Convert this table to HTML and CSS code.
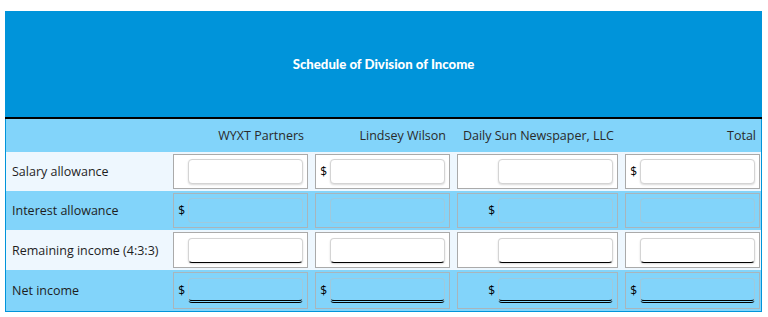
FILE: index.html
```html
<!DOCTYPE html>
<html lang="en">
<head>
    <meta charset="UTF-8">
    <meta name="viewport" content="width=device-width, initial-scale=1.0">
    <title>Schedule of Division of Income</title>
    <link rel="stylesheet" href="styles.css">
</head>
<body>
    <div class="schedule">
        <div class="schedule-title">Schedule of Division of Income</div>

        <div class="row row-head">
            <div class="label"></div>
            <div class="col-head">WYXT Partners</div>
            <div class="col-head">Lindsey Wilson</div>
            <div class="col-head">Daily Sun Newspaper, LLC</div>
            <div class="col-head">Total</div>
        </div>

        <!-- Salary allowance -->
        <div class="row row-light">
            <div class="label">Salary allowance</div>
            <div class="cell"><input class="amount" type="text"></div>
            <div class="cell"><span class="cur">$</span><input class="amount" type="text"></div>
            <div class="cell"><input class="amount" type="text"></div>
            <div class="cell"><span class="cur">$</span><input class="amount" type="text"></div>
        </div>

        <!-- Interest allowance -->
        <div class="row row-blue">
            <div class="label">Interest allowance</div>
            <div class="cell"><span class="cur">$</span><input class="amount" type="text" disabled></div>
            <div class="cell"><input class="amount" type="text" disabled></div>
            <div class="cell"><span class="cur">$</span><input class="amount" type="text" disabled></div>
            <div class="cell"><input class="amount" type="text" disabled></div>
        </div>

        <!-- Remaining income -->
        <div class="row row-light row-tall">
            <div class="label">Remaining income (4:3:3)</div>
            <div class="cell"><input class="amount single" type="text"></div>
            <div class="cell"><input class="amount single" type="text"></div>
            <div class="cell"><input class="amount single" type="text"></div>
            <div class="cell"><input class="amount single" type="text"></div>
        </div>

        <!-- Net income -->
        <div class="row row-blue row-taller">
            <div class="label">Net income</div>
            <div class="cell"><span class="cur">$</span><input class="amount double" type="text" disabled></div>
            <div class="cell"><span class="cur">$</span><input class="amount double" type="text" disabled></div>
            <div class="cell"><span class="cur">$</span><input class="amount double" type="text" disabled></div>
            <div class="cell"><span class="cur">$</span><input class="amount double" type="text" disabled></div>
        </div>
    </div>
</body>
</html>
```

FILE: styles.css
```css
body {
    margin: 0;
    padding: 0;
    background: #fff;
    font-family: 'Open Sans', 'DejaVu Sans', sans-serif;
    font-size: 12.5px;
    color: #1e1e1e;
}

.schedule {
    width: 757px;
    margin: 11px 0 0 5px;
    border: 1px solid #0094da;
    border-top: none;
    box-sizing: border-box;
}

.schedule-title {
    height: 106px;
    background: #0094da;
    color: #fff;
    font-family: Lato, 'Open Sans', sans-serif;
    font-weight: 900;
    font-size: 13.2px;
    display: flex;
    align-items: center;
    justify-content: center;
    border-bottom: 2px solid #000;
    margin: 0 -1px;
}

/* label column + four amount columns */
.row {
    display: grid;
    grid-template-columns: 160px 135px 135px 161px 135px;
    column-gap: 7px;
    padding-right: 1px;
    align-items: stretch;
}

.row-head {
    height: 33px;
    background: #82d4fa;
    align-items: center;
}

.row-light {
    height: 39px;
    background: #eef7fe;
}

.row-blue {
    height: 39px;
    background: #82d4fa;
}

.row-tall {
    height: 40px;
}

.row-taller {
    height: 41px;
}

.col-head {
    text-align: right;
    padding-right: 4px;
    color: #2a2a2a;
}

.label {
    display: flex;
    align-items: center;
    padding-left: 6px;
}

.cell {
    margin: 2px 0;
    border: 1px solid #aaa;
    display: flex;
    align-items: center;
    justify-content: flex-end;
    padding-right: 4px;
}

.row-light .cell {
    background: #fff;
}

.row-blue .cell {
    border-color: #a9b5bb;
}

.cur {
    font-size: 12px;
    color: #000;
    margin-right: 3px;
}

.amount {
    width: 115px;
    height: 25px;
    box-sizing: border-box;
    border: 1px solid #d4d4d4;
    border-radius: 4px;
    background: #fff;
    box-shadow: 0 1px 2px rgba(0, 0, 0, 0.15);
    font: inherit;
    padding: 0 4px;
}

.amount:disabled {
    background: #82d4fa;
    border-color: #9fc9dc;
    box-shadow: none;
}

.amount.single {
    border-bottom: 1.5px solid #000;
}

.amount.double {
    border-bottom: 3px double #000;
}
```
